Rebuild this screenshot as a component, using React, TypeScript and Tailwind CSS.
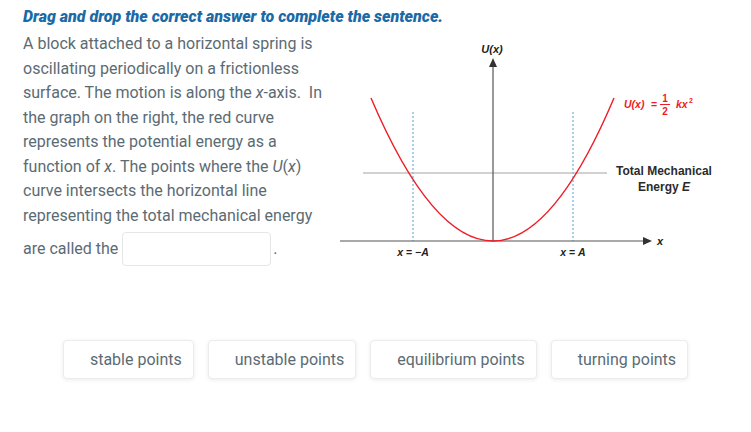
const choices = ["stable points", "unstable points", "equilibrium points", "turning points"]

const EnergyGraph = () => {
    return (
        <svg
            width="400"
            height="235"
            viewBox="330 35 400 235"
            className="shrink-0"
            style={{ fontFamily: '"Liberation Sans", Arial, sans-serif' }}
        >
            {/* total energy line */}
            <line x1="363" y1="173" x2="607" y2="173" stroke="#a3a3a3" strokeWidth="1" />

            {/* turning point markers */}
            <line x1="413" y1="112" x2="413" y2="241" stroke="#8cc2e8" strokeWidth="1.5" strokeDasharray="2 2" />
            <line x1="573" y1="112" x2="573" y2="241" stroke="#8cc2e8" strokeWidth="1.5" strokeDasharray="2 2" />

            {/* axes */}
            <line x1="493" y1="241" x2="493" y2="66" stroke="#555" strokeWidth="1.2" />
            <path d="M489 67 L493 58 L497 67 Z" fill="#333" />
            <line x1="340" y1="241" x2="645" y2="241" stroke="#555" strokeWidth="1.2" />
            <path d="M643 237 L652 241 L643 245 Z" fill="#333" />

            {/* potential energy curve */}
            <path d="M371 98 Q432 241 493 241 Q553.5 241 614 98" fill="none" stroke="#ee1c25" strokeWidth="1.4" />

            <text x="492" y="53" fontSize="11" fontWeight="700" fontStyle="italic" fill="#222" textAnchor="middle">U(x)</text>
            <text x="657" y="245" fontSize="11" fontWeight="700" fontStyle="italic" fill="#222">x</text>
            <text x="413" y="256" fontSize="10.5" fontWeight="700" fill="#222" textAnchor="middle">
                <tspan fontStyle="italic">x</tspan> = −<tspan fontStyle="italic">A</tspan>
            </text>
            <text x="573" y="256" fontSize="10.5" fontWeight="700" fill="#222" textAnchor="middle">
                <tspan fontStyle="italic">x</tspan> = <tspan fontStyle="italic">A</tspan>
            </text>

            {/* U(x) = 1/2 kx² */}
            <g fill="#ee1c25" fontSize="10.5" fontWeight="700">
                <text x="624" y="108" fontStyle="italic">U(x)</text>
                <text x="651" y="108">=</text>
                <text x="665" y="102" fontSize="10" textAnchor="middle">1</text>
                <line x1="660" y1="104.5" x2="670" y2="104.5" stroke="#ee1c25" strokeWidth="1" />
                <text x="665" y="115" fontSize="10" textAnchor="middle">2</text>
                <text x="676" y="108" fontStyle="italic">kx</text>
                <text x="689" y="103" fontSize="7">2</text>
            </g>

            <text x="664" y="175" fontSize="12" fontWeight="700" fill="#2b2b2b" textAnchor="middle">Total Mechanical</text>
            <text x="664" y="191" fontSize="12" fontWeight="700" fill="#2b2b2b" textAnchor="middle">
                Energy <tspan fontStyle="italic">E</tspan>
            </text>
        </svg>
    )
}

const App = () => {
    return (
        <div className="w-[751px] h-[432px] bg-white font-['Roboto',sans-serif]">
            <div className="pl-[23px] pt-[7px]">
                <h2 className="text-[16px] leading-[20px] font-black italic text-[#1b6aa6]">
                    Drag and drop the correct answer to complete the sentence.
                </h2>
                <div className="flex">
                    <p className="w-[300px] shrink-0 mt-[5px] text-[16px] leading-[24.5px] text-[#5b6b74]">
                        A block attached to a horizontal spring is oscillating periodically on a frictionless surface. The motion is along the <i>x</i>-axis.&nbsp; In the graph on the right, the red curve represents the potential energy as a function of <i>x</i>. The points where the <i>U</i>(<i>x</i>) curve intersects the horizontal line representing the total mechanical energy
                        <span className="flex items-center mt-[4px]">
                            are called the
                            <span className="inline-block ml-[4px] w-[149px] h-[34px] rounded-[4px] border border-[#e6e6e6] bg-white" />
                            <span className="ml-[2px]">.</span>
                        </span>
                    </p>
                    <div className="ml-[7px] mt-[8px]">
                        <EnergyGraph />
                    </div>
                </div>
            </div>

            <div className="flex justify-center gap-[14px] mt-[70px]">
                {choices.map((choice) => (
                    <div
                        key={choice}
                        className="h-[39px] flex items-center pl-[26px] pr-[11px] rounded-[4px] border border-[#ececec] bg-white shadow-[0_1px_4px_rgba(0,0,0,0.08)] text-[16px] text-[#5b6b74]"
                    >
                        {choice}
                    </div>
                ))}
            </div>
        </div>
    )
}

export default App
